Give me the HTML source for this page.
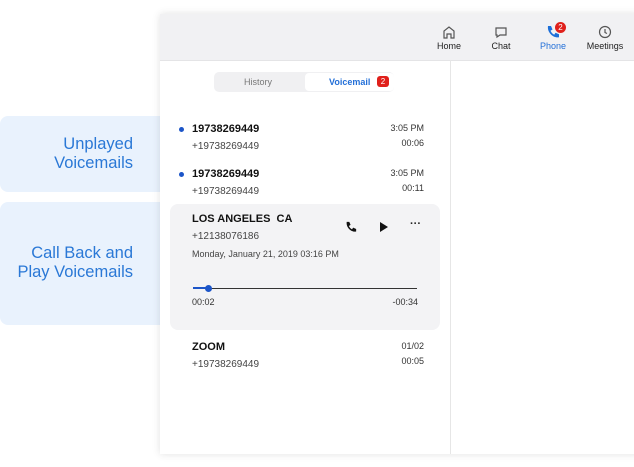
<!DOCTYPE html>
<html><head><style>
body{margin:0;width:634px;height:467px;background:#fff;position:relative;overflow:hidden;font-family:"Liberation Sans",sans-serif}
.a{position:absolute}
.call{position:absolute;left:0;width:175px;background:#e9f2fd;border-radius:8px;color:#2a78d6;font-size:16.5px;text-align:right;box-sizing:border-box;padding-right:42px;line-height:19px}
.b{font-weight:bold;font-size:11px;color:#111}
.s{font-size:10px;color:#444}
.r{font-size:9px;color:#333;text-align:right}
.nav{position:absolute;top:25px;font-size:9px;color:#222;text-align:center;width:50px}
</style></head><body>
<div class="call" style="top:116px;height:76px;padding-top:19px">Unplayed<br>Voicemails</div>
<div class="call" style="top:202px;height:123px;padding-top:42px">Call Back and<br>Play Voicemails</div>
<div class="a" style="left:160px;top:14px;width:480px;height:440px;background:#fff;box-shadow:0 0 8px rgba(0,0,0,.12)"></div>
<div class="a" style="left:160px;top:14px;width:480px;height:46px;background:#f1f1f3;border-bottom:1px solid #e4e4e6"></div>
<div class="a" style="left:450px;top:60px;width:1px;height:394px;background:#e6e6e6"></div>
<div class="nav" style="left:424px"><svg width="14" height="14" viewBox="0 0 14 14"><path d="M2 13V6l5-4 5 4v7H9V9H5v4z" fill="none" stroke="#555" stroke-width="1.2"/></svg><br>Home</div>
<div class="nav" style="left:476px"><svg width="14" height="14" viewBox="0 0 14 14"><path d="M2 3h10v7H6l-3 2v-2H2z" fill="none" stroke="#555" stroke-width="1.2"/></svg><br>Chat</div>
<div class="nav" style="left:528px;color:#2470d8"><svg width="14" height="14" viewBox="0 0 14 14"><path d="M2 1l3 0 1.5 3.5-2 1.3c1 2 2.2 3.2 3.7 3.9L9.5 7.8 13 9.3v3c-6 1-12-5-11-11.3z" fill="#1d6fd8"/></svg><br>Phone</div>
<div class="a" style="left:555px;top:22px;width:11px;height:11px;border-radius:50%;background:#e0201b;color:#fff;font-size:8px;text-align:center;line-height:11px">2</div>
<div class="nav" style="left:580px;width:50px"><svg width="14" height="14" viewBox="0 0 14 14"><circle cx="7" cy="7" r="5.5" fill="none" stroke="#555" stroke-width="1.2"/><path d="M7 4v3.5l2 1" fill="none" stroke="#555" stroke-width="1.2"/></svg><br>Meetings</div>
<div class="a" style="left:214px;top:72px;width:180px;height:20px;background:#f0f0f2;border-radius:5px"></div>
<div class="a" style="left:305px;top:73px;width:89px;height:18px;background:#fff;border-radius:4px"></div>
<div class="a" style="left:244px;top:77px;font-size:9px;color:#777">History</div>
<div class="a" style="left:329px;top:77px;font-size:9px;color:#2470d8;font-weight:bold">Voicemail</div>
<div class="a" style="left:377px;top:76px;width:12px;height:11px;border-radius:3px;background:#e0201b;color:#fff;font-size:8px;text-align:center;line-height:11px">2</div>

<div class="a" style="left:179px;top:127px;width:5px;height:5px;border-radius:50%;background:#1c55c8"></div>
<div class="a b" style="left:192px;top:123px">19738269449</div>
<div class="a s" style="left:192px;top:141px">+19738269449</div>
<div class="a r" style="left:370px;top:123px;width:54px">3:05 PM</div>
<div class="a r" style="left:370px;top:138px;width:54px">00:06</div>
<div class="a" style="left:179px;top:172px;width:5px;height:5px;border-radius:50%;background:#1c55c8"></div>
<div class="a b" style="left:192px;top:168px">19738269449</div>
<div class="a s" style="left:192px;top:186px">+19738269449</div>
<div class="a r" style="left:370px;top:168px;width:54px">3:05 PM</div>
<div class="a r" style="left:370px;top:183px;width:54px">00:11</div>

<div class="a" style="left:170px;top:204px;width:270px;height:126px;background:#f3f3f5;border-radius:8px"></div>
<div class="a b" style="left:192px;top:213px">LOS ANGELES&nbsp; CA</div>
<div class="a s" style="left:192px;top:231px">+12138076186</div>
<div class="a s" style="left:192px;top:249px;font-size:9px">Monday, January 21, 2019 03:16 PM</div>
<svg class="a" style="left:345px;top:221px" width="12" height="12" viewBox="0 0 14 14"><path d="M2 1l3 0 1.5 3.5-2 1.3c1 2 2.2 3.2 3.7 3.9L9.5 7.8 13 9.3v3c-6 1-12-5-11-11.3z" fill="#111"/></svg>
<div class="a" style="left:380px;top:222px;width:0;height:0;border-left:8px solid #111;border-top:5px solid transparent;border-bottom:5px solid transparent"></div>
<div class="a" style="left:410px;top:218px;font-size:11px;font-weight:bold;color:#222">···</div>
<div class="a" style="left:193px;top:288px;width:224px;height:1px;background:#333"></div>
<div class="a" style="left:205px;top:285px;width:7px;height:7px;border-radius:50%;background:#1c55c8"></div>
<div class="a" style="left:193px;top:287px;width:14px;height:2px;background:#1c55c8"></div>
<div class="a" style="left:192px;top:297px;font-size:9px;color:#333">00:02</div>
<div class="a r" style="left:370px;top:297px;width:48px">-00:34</div>

<div class="a b" style="left:192px;top:341px">ZOOM</div>
<div class="a s" style="left:192px;top:359px">+19738269449</div>
<div class="a r" style="left:370px;top:341px;width:54px">01/02</div>
<div class="a r" style="left:370px;top:356px;width:54px">00:05</div>
</body></html>
